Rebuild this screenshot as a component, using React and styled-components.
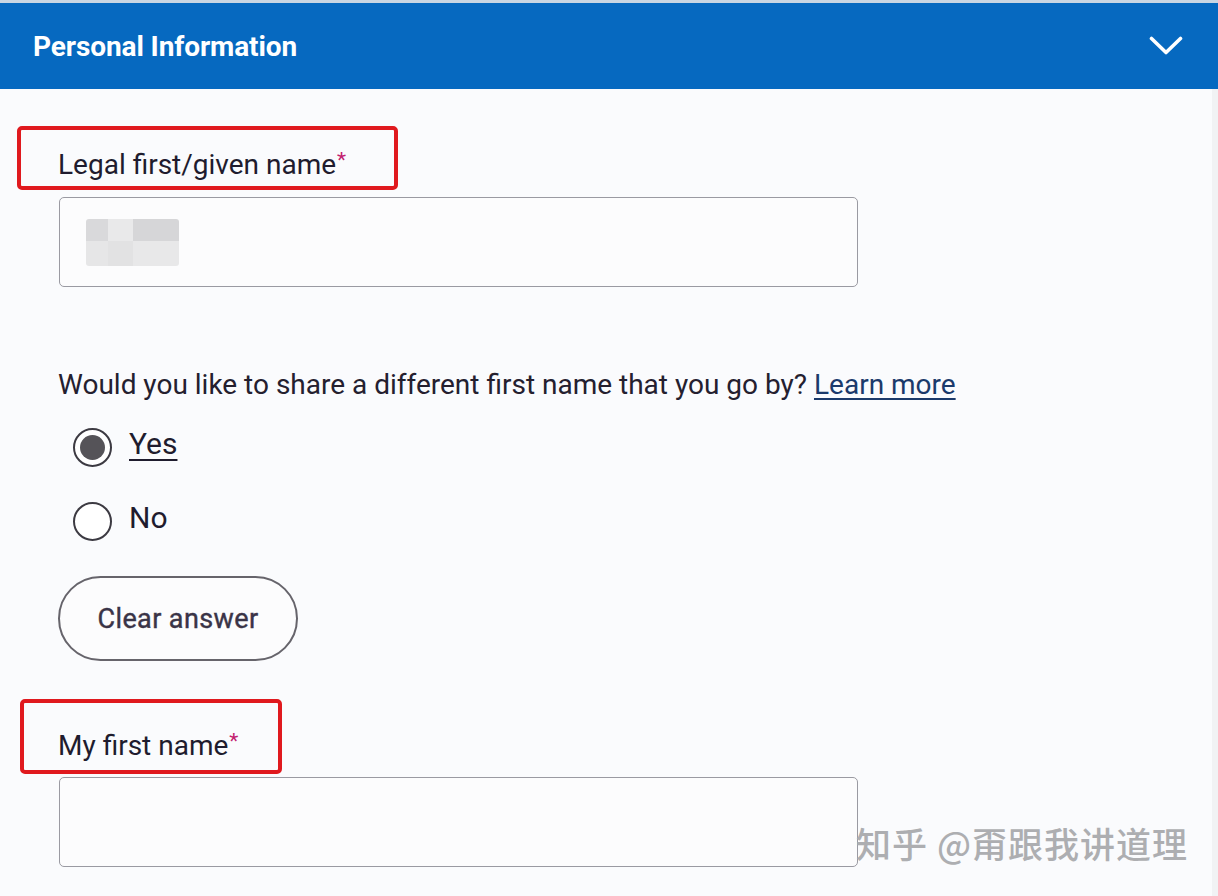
import React from "react";
import styled, { createGlobalStyle } from "styled-components";

const Global = createGlobalStyle`
  html, body { margin: 0; padding: 0; background: #fafbfd; }
  body { font-family: Roboto, "Noto Sans", "Liberation Sans", sans-serif; color: #1f1c2e; }
  * { box-sizing: border-box; }
`;

const Page = styled.div`
  width: 1218px;
  height: 896px;
  position: relative;
  overflow: hidden;
  background: #fafbfd;
  display: flex;
  flex-direction: column;
`;

const Header = styled.header`
  height: 89px;
  flex: none;
  border-top: 3px solid #c9d6e3;
  background: #0669c0;
  display: flex;
  align-items: center;
  justify-content: space-between;
  padding: 0 35px 0 33px;
`;

const Title = styled.h2`
  margin: 0;
  color: #ffffff;
  font-family: Roboto, "Liberation Sans", sans-serif;
  font-weight: 700;
  font-size: 28px;
  letter-spacing: -0.1px;
`;

const Body = styled.main`
  flex: 1;
  padding: 53px 0 0 58px;
  display: flex;
  flex-direction: column;
  align-items: flex-start;
  border-right: 6px solid #f1f2f4;
`;

const Field = styled.div`
  display: flex;
  flex-direction: column;
  align-items: flex-start;
  margin-top: ${(p) => p.$top || 0}px;
`;

const Label = styled.label`
  position: relative;
  font-size: 28px;
  line-height: 36px;
  color: #1f1c2e;
  &::before {
    content: "";
    position: absolute;
    left: ${(p) => p.$boxLeft}px;
    right: ${(p) => p.$boxRight}px;
    top: ${(p) => p.$boxTop}px;
    bottom: ${(p) => p.$boxBottom}px;
    border: 4px solid #e0191e;
    border-radius: 5px;
    pointer-events: none;
  }
`;

const Star = styled.span`
  color: #c2216f;
  font-size: 21px;
  vertical-align: 7px;
  margin-left: 1px;
`;

const InputBox = styled.div`
  width: 799px;
  height: 90px;
  margin-top: ${(p) => p.$gap}px;
  margin-left: 1px;
  border: 1px solid #9a9aa2;
  border-radius: 5px;
  background: #fcfcfd;
  display: flex;
  align-items: center;
  padding-left: 26px;
`;

const Mosaic = styled.div`
  display: grid;
  grid-template-columns: 22px 25px 46px;
  grid-template-rows: 22px 25px;
  border-radius: 3px;
  overflow: hidden;
`;

const Tile = styled.div`
  background: ${(p) => p.$c};
`;

const Question = styled.p`
  margin: 80px 0 0 0;
  font-size: 28px;
  line-height: 36px;
  color: #24202f;
`;

const Link = styled.a`
  color: #1b3a6b;
  text-decoration: underline;
  text-underline-offset: 4px;
  text-decoration-thickness: 1.5px;
`;

const RadioList = styled.div`
  display: flex;
  flex-direction: column;
  gap: 35px;
  margin-top: 25px;
  margin-left: 15px;
`;

const RadioRow = styled.div`
  display: flex;
  align-items: center;
  gap: 17px;
  height: 39px;
`;

const Circle = styled.span`
  width: 39px;
  height: 39px;
  flex: none;
  border-radius: 50%;
  border: 2px solid #3c3a42;
  background: #ffffff;
  display: flex;
  align-items: center;
  justify-content: center;
  &::after {
    content: "";
    width: 25px;
    height: 25px;
    border-radius: 50%;
    background: #555358;
    display: ${(p) => (p.$on ? "block" : "none")};
  }
`;

const RadioText = styled.span`
  font-size: 30px;
  line-height: 38px;
  color: #1f1c2e;
  text-decoration: ${(p) => (p.$on ? "underline" : "none")};
  text-underline-offset: 5px;
  text-decoration-thickness: 2px;
  margin-top: -7px;
`;

const ClearButton = styled.button`
  margin-top: 35px;
  width: 240px;
  height: 85px;
  border-radius: 43px;
  border: 2px solid #66646b;
  background: #fcfcfd;
  font-family: Roboto, "Liberation Sans", sans-serif;
  font-size: 27px;
  font-weight: 400;
  color: #3a3447;
  letter-spacing: 0.4px;
  -webkit-text-stroke: 0.4px #3a3447;
  padding: 0;
`;

const Watermark = styled.div`
  position: absolute;
  right: 30px;
  bottom: 28px;
  font-family: "Noto Sans CJK SC", sans-serif;
  font-size: 35px;
  font-weight: 500;
  color: #adaeb1;
  letter-spacing: 1px;
`;

function Chevron() {
  return (
    <svg width="34" height="22" viewBox="0 0 34 22" fill="none">
      <path d="M2.5 3.5 L17 17.5 L31.5 3.5" stroke="#ffffff" strokeWidth="3.6" strokeLinecap="round" strokeLinejoin="round" />
    </svg>
  );
}

export default function App() {
  const tiles = ["#d9d9db", "#e9e9ea", "#d6d6d8", "#e6e6e7", "#e2e2e3", "#e8e8e9"];
  return (
    <Page>
      <Global />
      <Header>
        <Title>Personal Information</Title>
        <Chevron />
      </Header>
      <Body>
        <Field>
          <Label $boxLeft={-41} $boxRight={-52} $boxTop={-16} $boxBottom={-7}>
            Legal first/given name<Star>*</Star>
          </Label>
          <InputBox $gap={14}>
            <Mosaic>
              {tiles.map((c, i) => (
                <Tile key={i} $c={c} />
              ))}
            </Mosaic>
          </InputBox>
        </Field>
        <Question>
          Would you like to share a different first name that you go by? <Link href="#">Learn more</Link>
        </Question>
        <RadioList>
          <RadioRow>
            <Circle $on />
            <RadioText $on>Yes</RadioText>
          </RadioRow>
          <RadioRow>
            <Circle />
            <RadioText>No</RadioText>
          </RadioRow>
        </RadioList>
        <ClearButton>Clear answer</ClearButton>
        <Field $top={62}>
          <Label $boxLeft={-38} $boxRight={-44} $boxTop={-24} $boxBottom={-10}>
            My first name<Star>*</Star>
          </Label>
          <InputBox $gap={13} />
        </Field>
      </Body>
      <Watermark>知乎 @甭跟我讲道理</Watermark>
    </Page>
  );
}
